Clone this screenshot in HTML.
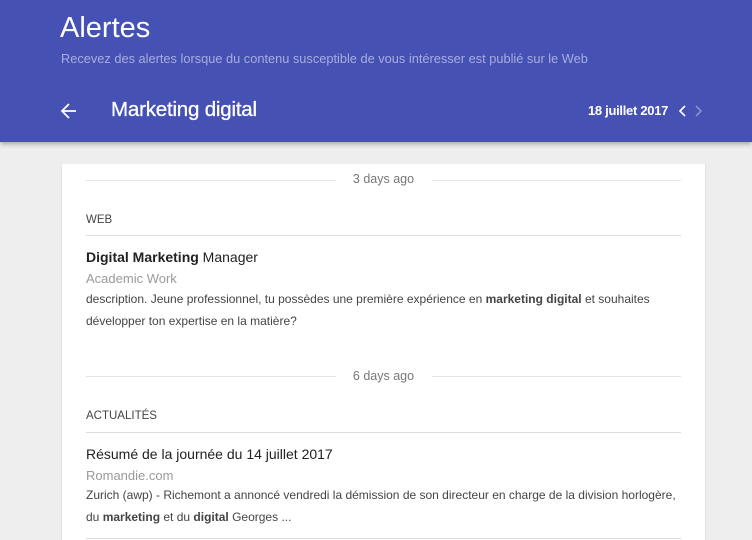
<!DOCTYPE html><html><head><style>
body{margin:0;width:752px;height:540px;overflow:hidden;background:#eeeeee;font-family:"Liberation Sans",sans-serif;position:relative}
.h{position:absolute;left:0;top:0;width:752px;height:142px;background:#4651b4;box-shadow:0 2px 5px rgba(0,0,0,.3)}
.a{position:absolute;white-space:nowrap}
.card{position:absolute;left:62px;top:164px;width:643px;height:376px;background:#fff;box-shadow:0 1px 2px rgba(0,0,0,.15)}
.ln{position:absolute;height:1px;background:#e4e4e4}
.sep{position:absolute;left:24px;width:595px;font-size:12.5px;color:#777;text-align:center}
.t{font-size:14px;color:#222}
.s{font-size:13px;color:#9a9a9a}
.d{font-size:12px;color:#444;line-height:22px;width:590px;white-space:normal}
.c{font-size:11.5px;color:#444}
</style></head><body>
<div class="h">
<div class="a" style="left:60px;top:12px;font-size:29px;color:#fff;font-weight:300">Alertes</div>
<div class="a" style="left:61px;top:51px;font-size:12.8px;color:#a8addf">Recevez des alertes lorsque du contenu susceptible de vous intéresser est publié sur le Web</div>
<svg class="a" style="left:60px;top:102px" width="18" height="18" viewBox="0 0 18 18"><path d="M16 9H3M9 2L2 9l7 7" stroke="#fff" stroke-width="1.8" fill="none"/></svg>
<div class="a" style="left:111px;top:98px;font-size:20.5px;color:#fff;letter-spacing:-0.2px;-webkit-text-stroke:0.3px #fff">Marketing digital</div>
<div class="a" style="left:588px;top:103px;font-size:13px;color:#fff;font-weight:bold;letter-spacing:-0.3px">18 juillet 2017</div>
<svg class="a" style="left:678px;top:104px" width="30" height="14" viewBox="0 0 30 14"><path d="M7 2L2 7l5 5" stroke="#fff" stroke-width="1.6" fill="none"/><path d="M18 2l5 5-5 5" stroke="#8a90cf" stroke-width="1.6" fill="none"/></svg>
</div>
<div class="card">
<div class="ln" style="left:24px;top:16px;width:250px"></div><div class="ln" style="left:370px;top:16px;width:249px"></div>
<div class="sep" style="top:8px">3 days ago</div>
<div class="a c" style="left:24px;top:50px">WEB</div>
<div class="ln" style="left:24px;top:71px;width:595px;background:#ddd"></div>
<div class="a t" style="left:24px;top:85px"><b>Digital Marketing</b> Manager</div>
<div class="a s" style="left:24px;top:107px">Academic Work</div>
<div class="a d" style="left:24px;top:124px">description. Jeune professionnel, tu possèdes une première expérience en <b>marketing digital</b> et souhaites développer ton expertise en la matière?</div>
<div class="ln" style="left:24px;top:212px;width:250px"></div><div class="ln" style="left:370px;top:212px;width:249px"></div>
<div class="sep" style="top:205px">6 days ago</div>
<div class="a c" style="left:24px;top:246px">ACTUALITÉS</div>
<div class="ln" style="left:24px;top:268px;width:595px;background:#ddd"></div>
<div class="a t" style="left:24px;top:282px">Résumé de la journée du 14 juillet 2017</div>
<div class="a s" style="left:24px;top:304px">Romandie.com</div>
<div class="a d" style="left:24px;top:320px">Zurich (awp) - Richemont a annoncé vendredi la démission de son directeur en charge de la division horlogère, du <b>marketing</b> et du <b>digital</b> Georges ...</div>
<div class="ln" style="left:24px;top:374px;width:595px;background:#ddd"></div>
</div>
</body></html>
